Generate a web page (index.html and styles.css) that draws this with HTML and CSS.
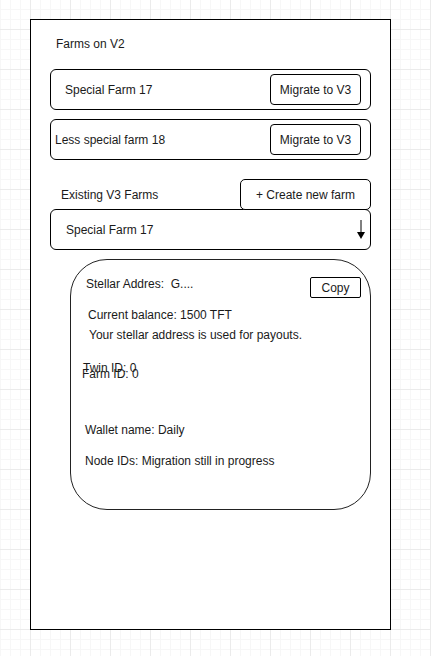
FILE: index.html
```html
<!DOCTYPE html>
<html>
<head>
<meta charset="utf-8">
<link rel="stylesheet" href="styles.css">
</head>
<body>
<div class="frame">
  <div class="title">Farms on V2</div>
  <div class="row row-first">
    <span class="row-label label-a">Special Farm 17</span>
    <button class="btn btn-migrate">Migrate to V3</button>
  </div>
  <div class="row row-second">
    <span class="row-label label-b">Less special farm 18</span>
    <button class="btn btn-migrate">Migrate to V3</button>
  </div>
  <div class="v3-header">
    <span class="v3-title">Existing V3 Farms</span>
    <button class="btn btn-create">+ Create new farm</button>
  </div>
  <div class="dropdown">
    <span class="dropdown-label">Special Farm 17</span>
    <svg class="dropdown-arrow" width="10" height="20" viewBox="0 0 10 20">
      <line x1="5" y1="0" x2="5" y2="14" stroke="#000" stroke-width="1"/>
      <polygon points="1,12 9,12 5,19" fill="#000"/>
    </svg>
  </div>
  <div class="card">
    <div class="stellar-row">
      <span class="stellar-text">Stellar Addres:&nbsp; G....</span>
      <button class="btn btn-copy">Copy</button>
    </div>
    <div class="line balance">Current balance: 1500 TFT</div>
    <div class="line payouts">Your stellar address is used for payouts.</div>
    <div class="ids">
      <span class="twin">Twin ID: 0</span>
      <span class="farm">Farm ID: 0</span>
    </div>
    <div class="line wallet">Wallet name: Daily</div>
    <div class="line nodes">Node IDs: Migration still in progress</div>
  </div>
</div>
</body>
</html>
```
FILE: styles.css
```css
* { box-sizing: border-box; }
html, body { margin: 0; padding: 0; }
body {
  width: 431px;
  height: 656px;
  overflow: hidden;
  font-family: "Liberation Sans", Arial, sans-serif;
  font-size: 12px;
  line-height: 14px;
  color: #1a1a1a;
  background-color: #fff;
  background-image:
    linear-gradient(to right, #ebebeb 1px, transparent 1px),
    linear-gradient(to bottom, #ebebeb 1px, transparent 1px),
    linear-gradient(to right, #f7f7f7 1px, transparent 1px),
    linear-gradient(to bottom, #f7f7f7 1px, transparent 1px);
  background-size: 40px 40px, 40px 40px, 10px 10px, 10px 10px;
  background-position: 30px 0, 0 29px, 0 0, 0 9px;
  padding-top: 19px;
}
.frame {
  margin-left: 30px;
  width: 361px;
  height: 611px;
  border: 1px solid #000;
  background: #fff;
  padding: 17px 0 0 19px;
}
.title { margin-left: 6px; }
.row {
  width: 321px;
  height: 41px;
  border: 1px solid #000;
  border-radius: 6px;
  display: flex;
  align-items: center;
  justify-content: space-between;
  padding-right: 9px;
}
.row-first { margin-top: 18px; }
.row-second { margin-top: 9px; }
.label-a { margin-left: 14px; }
.label-b { margin-left: 4px; }
.btn {
  font-family: inherit;
  font-size: 12px;
  line-height: 14px;
  color: #1a1a1a;
  background: #fff;
  border: 1px solid #000;
  padding: 0;
  margin: 0;
}
.btn-migrate {
  width: 91px;
  height: 31px;
  border-radius: 4px;
}
.v3-header {
  margin-top: 19px;
  width: 321px;
  height: 31px;
  display: flex;
  align-items: center;
  justify-content: space-between;
}
.v3-title { margin-left: 11px; }
.btn-create {
  width: 131px;
  height: 31px;
  border-radius: 5px;
}
.dropdown {
  margin-top: -1px;
  width: 321px;
  height: 41px;
  border: 1px solid #000;
  border-radius: 6px;
  display: flex;
  align-items: center;
  justify-content: space-between;
  padding-left: 15px;
  padding-right: 4px;
}
.card {
  margin-top: 9px;
  margin-left: 20px;
  width: 301px;
  height: 251px;
  border: 1px solid #222;
  border-radius: 37px;
  padding-top: 17px;
}
.stellar-row {
  display: flex;
  align-items: flex-start;
  justify-content: space-between;
  padding-left: 15px;
  padding-right: 9px;
}
.btn-copy {
  width: 51px;
  height: 21px;
  border-radius: 2px;
}
.balance { margin-top: 10px; margin-left: 17px; }
.payouts { margin-top: 6px; margin-left: 18px; }
.ids {
  display: grid;
  margin-top: 19px;
  margin-left: 11px;
}
.twin { grid-area: 1 / 1; margin-left: 1px; }
.farm { grid-area: 1 / 1; margin-top: 6px; }
.wallet { margin-top: 42px; margin-left: 14px; }
.nodes { margin-top: 17px; margin-left: 14px; }
```
